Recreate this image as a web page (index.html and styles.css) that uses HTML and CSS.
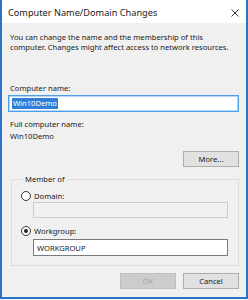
FILE: index.html
```html
<!DOCTYPE html>
<html>
<head>
<meta charset="utf-8">
<link rel="stylesheet" href="styles.css">
</head>
<body>
<div class="window">
  <div class="titlebar">
    <span class="title">Computer Name/Domain Changes</span>
    <svg class="close" width="8" height="8" viewBox="0 0 8 8"><path d="M0.5 0.5 L7.5 7.5 M7.5 0.5 L0.5 7.5" stroke="#222" stroke-width="0.9" fill="none"/></svg>
  </div>
  <div class="content">
    <p class="desc">You can change the name and the membership of this computer. Changes might affect access to network resources.</p>
    <div class="label label-name">Computer name:</div>
    <div class="input focused"><span class="sel">Win10Demo</span></div>
    <div class="label label-full">Full computer name:</div>
    <div class="label label-value">Win10Demo</div>
    <div class="row-right more-row"><div class="btn">More...</div></div>
    <fieldset class="group">
      <legend>Member of</legend>
      <div class="radio-row first"><span class="radio"></span><span>Domain:</span></div>
      <div class="input sub disabled"></div>
      <div class="radio-row second"><span class="radio checked"></span><span>Workgroup:</span></div>
      <div class="input sub normal"><span class="val">WORKGROUP</span></div>
    </fieldset>
    <div class="row-right buttons">
      <div class="btn disabled-btn">OK</div>
      <div class="btn">Cancel</div>
    </div>
  </div>
</div>
</body>
</html>
```
FILE: styles.css
```css
html, body {
  margin: 0;
  padding: 0;
  background: #f0f0f0;
}
body {
  font-family: "Noto Sans", "Open Sans", sans-serif;
  font-size: 7.6px;
  color: #1a1a1a;
}
.window {
  width: 248px;
  height: 299px;
  box-sizing: border-box;
  border-left: 2px solid #2a74c6;
  border-right: 2px solid #2a74c6;
  border-bottom: 2px solid #2a74c6;
  background: #f0f0f0;
  display: flex;
  flex-direction: column;
}
.titlebar {
  height: 23px;
  background: #ffffff;
  display: flex;
  align-items: center;
  justify-content: space-between;
  padding: 0 7px 0 6px;
  flex: none;
}
.title {
  font-size: 9.2px;
  color: #1a1a1a;
  margin-top: 2px;
}
.close {
  display: block;
  margin-top: 2px;
}
.content {
  padding: 0 7px 0 8px;
  display: flex;
  flex-direction: column;
}
.desc {
  margin: 9px 0 0 0;
  line-height: 10px;
}
.label {
  line-height: 10px;
  height: 10px;
}
.label-name { margin-top: 31px; }
.label-full { margin-top: 7px; }
.label-value { margin-top: 2px; }
.input {
  box-sizing: border-box;
  height: 17px;
  display: flex;
  align-items: center;
}
.focused {
  margin-top: 2px;
  margin-left: -2px;
  border: 1px solid #4d9ee9;
  box-shadow: inset 0 0 0 1px #b3d5f6;
  background: #fff;
  padding-left: 3px;
}
.sel {
  background: #2f7fd8;
  color: #fff;
  line-height: 11px;
  padding: 0 1px;
}
.row-right {
  display: flex;
  justify-content: flex-end;
  gap: 7px;
}
.more-row { margin-top: 10px; }
.btn {
  box-sizing: border-box;
  width: 56px;
  height: 16px;
  border: 1px solid #adadad;
  background: #e1e1e1;
  display: flex;
  align-items: center;
  justify-content: center;
  color: #1a1a1a;
}
.disabled-btn {
  background: #cccccc;
  border-color: #bfbfbf;
  color: #a3a3a3;
}
.group {
  margin: 7px 0 0 1px;
  border: 1px solid #dcdcdc;
  padding: 7px 9px 9px 9px;
  min-width: 0;
}
.group legend {
  padding: 0 2px;
  margin-left: 2px;
  line-height: 10px;
}
.radio-row {
  display: flex;
  align-items: center;
  gap: 3px;
  height: 10px;
  line-height: 10px;
}
.radio-row.second { margin-top: 8px; }
.radio {
  box-sizing: border-box;
  width: 10px;
  height: 10px;
  border: 1px solid #333;
  border-radius: 50%;
  background: #fff;
  display: flex;
  align-items: center;
  justify-content: center;
}
.radio.checked::after {
  content: "";
  width: 4px;
  height: 4px;
  border-radius: 50%;
  background: #222;
}
.sub {
  margin-left: 12px;
  width: 195px;
}
.disabled {
  margin-top: 1px;
  height: 16px;
  border: 1px solid #cccccc;
  background: #f0f0f0;
}
.normal {
  margin-top: 3px;
  border: 1px solid #7a7a7a;
  background: #fff;
  padding-left: 3px;
}
.buttons { margin-top: 7px; }
```
